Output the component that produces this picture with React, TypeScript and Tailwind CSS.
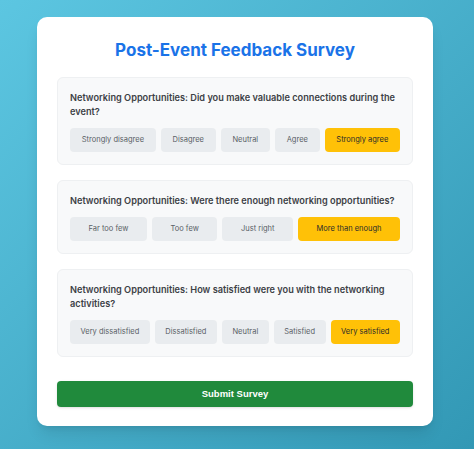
import React from "react";

type Question = { text: string; options: string[]; selected: number };

export default function App() {
  const questions: Question[] = [
    {
      text: "Networking Opportunities: Did you make valuable connections during the event?",
      options: ["Strongly disagree", "Disagree", "Neutral", "Agree", "Strongly agree"],
      selected: 4,
    },
    {
      text: "Networking Opportunities: Were there enough networking opportunities?",
      options: ["Far too few", "Too few", "Just right", "More than enough"],
      selected: 3,
    },
    {
      text: "Networking Opportunities: How satisfied were you with the networking activities?",
      options: ["Very dissatisfied", "Dissatisfied", "Neutral", "Satisfied", "Very satisfied"],
      selected: 4,
    },
  ];

  return (
    <main
      className="w-[474px] h-[449px] overflow-hidden bg-gradient-to-br from-[#5cc6e1] to-[#3298b5] pt-[17px] pl-[37px]"
      style={{ fontFamily: "Inter, 'Open Sans', sans-serif" }}
    >
      <div className="w-[396px] bg-white rounded-[10px] shadow-lg px-5 pt-[22px] pb-[19px]">
        <h1 className="text-center text-[17px] font-bold text-[#1a73e8] leading-[22px] mb-[16px]">
          Post-Event Feedback Survey
        </h1>

        <div className="flex flex-col gap-[15px]">
          {questions.map((q, i) => (
            <section key={i} className="bg-[#f8f9fa] border border-[#eef0f2] rounded-md px-[12px] pt-[13px] pb-[12px]">
              <p className="text-[9.2px] font-semibold text-[#3d4146] leading-[14px] mb-[9px]">{q.text}</p>
              <div className="flex gap-[5px]">
                {q.options.map((o, j) => (
                  <div
                    key={j}
                    className={`flex-auto h-[24px] rounded-[4px] px-[9px] flex items-center justify-center text-[7.5px] whitespace-nowrap ${
                      j === q.selected ? "bg-[#ffc107] text-[#2b2b2b]" : "bg-[#e9ecef] text-[#5a5f66]"
                    }`}
                  >
                    {o}
                  </div>
                ))}
              </div>
            </section>
          ))}
        </div>

        <button
          className="mt-[24px] w-full h-[26px] rounded-[4px] bg-[#208a3c] text-white text-[9.5px] font-bold shadow-sm"
          style={{ fontFamily: "'Liberation Sans', Arial, sans-serif" }}
        >
          Submit Survey
        </button>
      </div>
    </main>
  );
}
